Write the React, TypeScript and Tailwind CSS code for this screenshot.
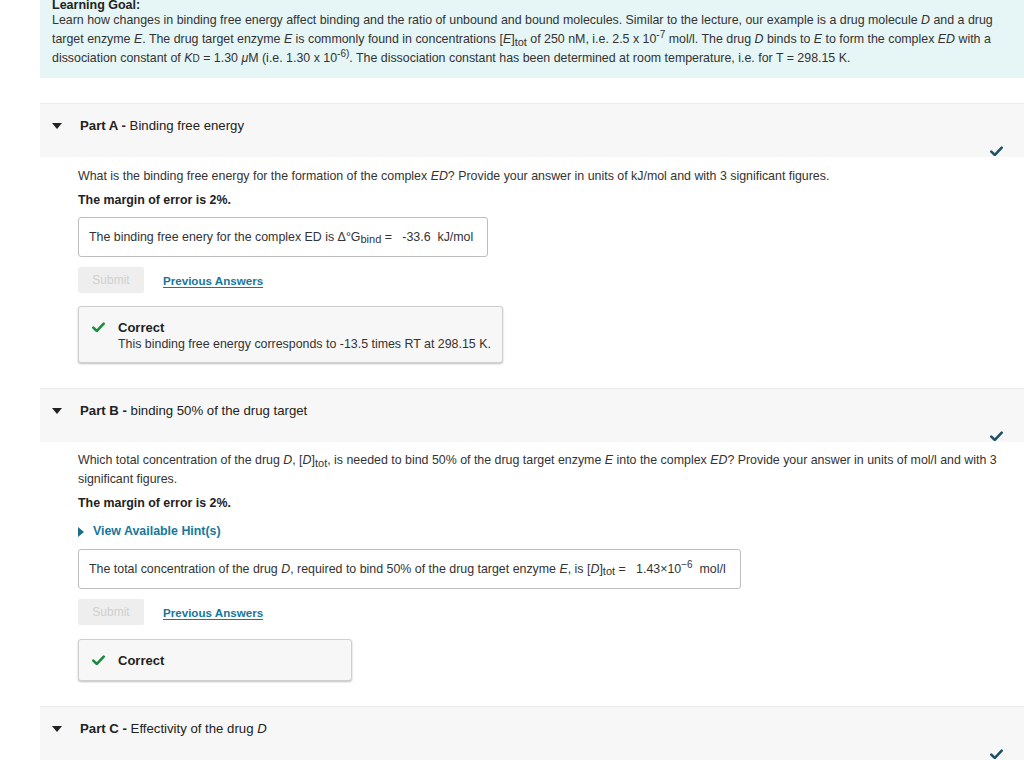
import React from 'react';

const font = { fontFamily: '"Liberation Sans", Arial, Helvetica, sans-serif' };

function DownTriangle() {
  return (
    <svg width="10" height="6" viewBox="0 0 10 6" className="shrink-0">
      <path d="M0 0 L10 0 L5 6 Z" fill="#222" />
    </svg>
  );
}

function RightTriangle() {
  return (
    <svg width="6" height="10" viewBox="0 0 6 10" className="shrink-0">
      <path d="M0 0 L6 5 L0 10 Z" fill="#1a6f8a" />
    </svg>
  );
}

function Check({ color, size = 13 }: { color: string; size?: number }) {
  return (
    <svg width={size} height={size * 0.8} viewBox="0 0 16 13" className="shrink-0">
      <path d="M1.5 7 L6 11.2 L14.5 2" fill="none" stroke={color} strokeWidth="3.2" strokeLinecap="round" strokeLinejoin="round" />
    </svg>
  );
}

function PartHeader({ part, children }: { part: string; children: React.ReactNode }) {
  return (
    <div className="relative h-[54px] bg-[#f7f7f7] border-t border-[#ececec] flex items-start pt-[12px]">
      <div className="w-[40px] flex justify-end pr-[18px] pt-[7px]">
        <DownTriangle />
      </div>
      <div className="text-[13.2px] leading-[18px] text-[#222] pt-[1px]">
        <span className="font-bold">Part {part} - </span>
        {children}
      </div>
      <div className="absolute right-[21px] bottom-[1px]">
        <Check color="#1d5266" />
      </div>
    </div>
  );
}

function SubmitRow() {
  return (
    <div className="flex items-center gap-[19px]">
      <div className="w-[66px] h-[26px] bg-[#eeeeee] text-[#d0d0d0] text-[12px] flex items-center justify-center rounded-[2px]">
        Submit
      </div>
      <a className="text-[11.6px] font-bold text-[#17779a] underline underline-offset-2 decoration-[#17779a]">Previous Answers</a>
    </div>
  );
}

export default function App() {
  return (
    <div className="min-h-screen bg-white text-[#333] overflow-hidden" style={font}>
      <div className="pl-[40px]">
        {/* Learning goal */}
        <div className="bg-[#e6f5f5] px-[12px] pb-[10px] -mt-[1px] text-[12.4px] leading-[19px] text-[#333]">
          <div className="font-bold text-[12.5px] leading-[12px] text-[#222]">Learning Goal:</div>
          <p>
            Learn how changes in binding free energy affect binding and the ratio of unbound and bound molecules. Similar to the lecture, our example is a drug molecule <i>D</i> and a drug target enzyme <i>E</i>. The drug target enzyme <i>E</i> is commonly found in concentrations [<i>E</i>]<sub className="text-[11px]">tot</sub> of 250 nM, i.e. 2.5 x 10<sup className="text-[10px]">-7</sup> mol/l. The drug <i>D</i> binds to <i>E</i> to form the complex <i>ED</i> with a dissociation constant of <i>K</i><span className="text-[10px]">D</span> = 1.30 <i>μ</i>M (i.e. 1.30 x 10<sup className="text-[10px]">-6)</sup>. The dissociation constant has been determined at room temperature, i.e. for T = 298.15 K.
          </p>
        </div>

        {/* Part A */}
        <div className="mt-[25px]">
          <PartHeader part="A">Binding free energy</PartHeader>
          <div className="pl-[38px] pt-[10px] text-[12.4px] leading-[19px] text-[#333]">
            <p>
              What is the binding free energy for the formation of the complex <i>ED</i>? Provide your answer in units of kJ/mol and with 3 significant figures.
            </p>
            <p className="font-bold text-[#222] mt-[5px]">The margin of error is 2%.</p>
            <div className="mt-[7px] w-[410px] h-[40px] border border-[#bdbdbd] rounded-[3px] flex items-center px-[10px]">
              <span>
                The binding free enery for the complex ED is Δ°G<sub className="text-[11px]">bind</sub> =&nbsp;&nbsp;&nbsp;-33.6&nbsp;&nbsp;kJ/mol
              </span>
            </div>
            <div className="mt-[10px]">
              <SubmitRow />
            </div>
            <div className="mt-[13px] w-[425px] h-[57px] bg-[#f7f7f7] border border-[#cfcfcf] rounded-[3px] shadow-[0_1px_2px_rgba(0,0,0,0.25)] flex items-start pt-[12px] pl-[13px]">
              <div className="pt-[3px] pr-[13px]">
                <Check color="#1b8a3e" />
              </div>
              <div className="leading-[17px]">
                <div className="font-bold text-[13px] text-[#222]">Correct</div>
                <div className="text-[12.4px] text-[#333]">This binding free energy corresponds to -13.5 times RT at 298.15 K.</div>
              </div>
            </div>
          </div>
        </div>

        {/* Part B */}
        <div className="mt-[25px]">
          <PartHeader part="B">binding 50% of the drug target</PartHeader>
          <div className="pl-[38px] pr-[18px] pt-[9px] text-[12.4px] leading-[19px] text-[#333]">
            <p>
              Which total concentration of the drug <i>D</i>, [<i>D</i>]<sub className="text-[11px]">tot</sub>, is needed to bind 50% of the drug target enzyme <i>E</i> into the complex <i>ED</i>? Provide your answer in units of mol/l and with 3 significant figures.
            </p>
            <p className="font-bold text-[#222] mt-[5px]">The margin of error is 2%.</p>
            <div className="mt-[9px] flex items-center gap-[9px] text-[#17779a] font-bold">
              <RightTriangle />
              <span>View Available Hint(s)</span>
            </div>
            <div className="mt-[8px] w-[663px] h-[40px] border border-[#bdbdbd] rounded-[3px] flex items-center px-[10px]">
              <span>
                The total concentration of the drug <i>D</i>, required to bind 50% of the drug target enzyme <i>E</i>, is [<i>D</i>]<sub className="text-[11px]">tot</sub> =&nbsp;&nbsp;&nbsp;1.43×10<sup className="text-[10px]">−6</sup>&nbsp;&nbsp;mol/l
              </span>
            </div>
            <div className="mt-[10px]">
              <SubmitRow />
            </div>
            <div className="mt-[14px] w-[274px] h-[42px] bg-[#f7f7f7] border border-[#cfcfcf] rounded-[3px] shadow-[0_1px_2px_rgba(0,0,0,0.25)] flex items-center pl-[13px]">
              <div className="pr-[13px]">
                <Check color="#1b8a3e" />
              </div>
              <div className="font-bold text-[13px] text-[#222]">Correct</div>
            </div>
          </div>
        </div>

        {/* Part C */}
        <div className="mt-[25px]">
          <PartHeader part="C">
            Effectivity of the drug <i>D</i>
          </PartHeader>
        </div>
      </div>
    </div>
  );
}
